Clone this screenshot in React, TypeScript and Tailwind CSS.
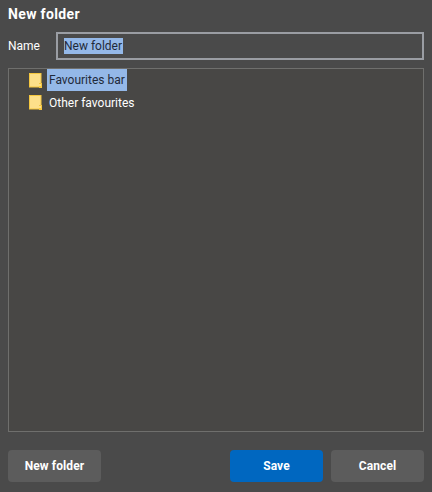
const FolderIcon = () => (
  <svg width="13" height="15" viewBox="0 0 13 15" className="shrink-0">
    <rect x="0.5" y="0.5" width="11.5" height="13.5" fill="#fde08a" stroke="#f5c73f" />
    <rect x="10" y="10" width="3" height="5" fill="#f5c73f" />
    <rect x="10" y="11" width="2" height="2" fill="#fde08a" />
  </svg>
)

const buttonClass = 'h-8 w-[93px] rounded-[4px] text-xs font-bold tracking-[0.1px] text-white'

export default function App() {
  return (
    <div
      className="flex h-[492px] w-[432px] flex-col overflow-hidden bg-[#4a4a4a] px-2 pt-[5px] text-xs text-white"
      style={{ fontFamily: 'Roboto, "Open Sans", sans-serif' }}
    >
      <h1 className="h-[19px] text-sm leading-[19px] font-bold tracking-[0.35px]">New folder</h1>

      {/* Name */}
      <div className="mt-2 flex h-7 items-center">
        <label className="w-12">Name</label>
        <div className="flex h-7 flex-1 items-center border-2 border-[#9a9da3] pl-[6px]">
          <span className="bg-[#94b8e8] pr-px leading-4 text-[#1f2a3a]">New folder</span>
        </div>
      </div>

      {/* Folder tree */}
      <div className="mt-2 flex h-[364px] flex-col border border-[#6f6f6d] bg-[#484745]">
        <div className="flex h-[22px] items-center">
          <div className="ml-5 w-[18px]">
            <FolderIcon />
          </div>
          <span className="flex h-[22px] items-center bg-[#94b8e8] pr-[2px] pl-[2px] text-[#1f2a3a]">
            Favourites bar
          </span>
        </div>
        <div className="flex h-[23px] items-center">
          <div className="ml-5 w-[18px]">
            <FolderIcon />
          </div>
          <span className="pl-[2px]">Other favourites</span>
        </div>
      </div>

      {/* Actions */}
      <div className="mt-[18px] flex gap-2">
        <button className={`${buttonClass} mr-auto bg-[#5c5c5c]`}>New folder</button>
        <button className={`${buttonClass} bg-[#0067c0]`}>Save</button>
        <button className={`${buttonClass} bg-[#5c5c5c]`}>Cancel</button>
      </div>
    </div>
  )
}
